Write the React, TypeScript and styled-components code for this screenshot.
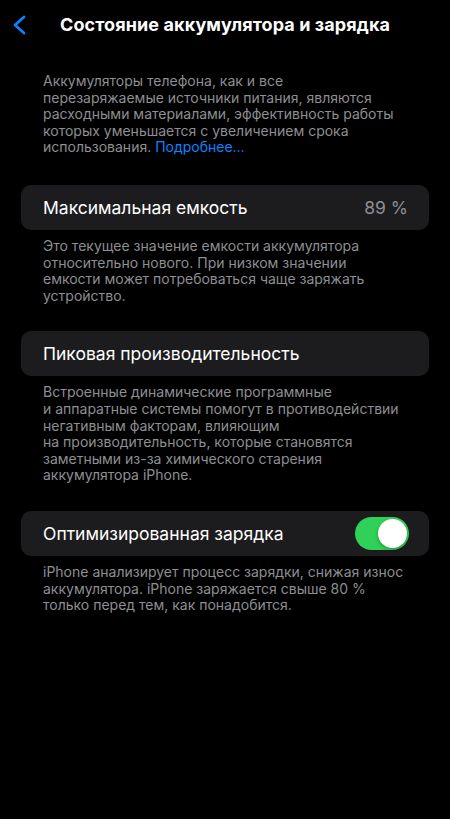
import React from 'react';
import styled, { createGlobalStyle } from 'styled-components';

const GlobalStyle = createGlobalStyle`
  html, body {
    margin: 0;
    padding: 0;
    background: #000;
  }
  body {
    font-family: Inter, "Noto Sans", sans-serif;
    -webkit-font-smoothing: antialiased;
  }
`;

const Screen = styled.div`
  width: 450px;
  min-height: 819px;
  background: #000;
  color: #fff;
  box-sizing: border-box;
`;

const NavBar = styled.header`
  height: 49px;
  display: flex;
  align-items: center;
  padding-left: 12px;

  svg {
    flex: none;
    margin-top: 1px;
  }

  h1 {
    margin: 0 0 0 34px;
    font-size: 18px;
    font-weight: 700;
    letter-spacing: 0.1px;
  }
`;

const Content = styled.main`
  padding: 24px 21px 0;
  display: flex;
  flex-direction: column;
`;

const Note = styled.p<{ $gap?: number }>`
  margin: 0 0 ${(p) => p.$gap ?? 20}px;
  padding: 0 22px;
  font-size: 14px;
  line-height: 16.6px;
  color: #8e8e93;

  a {
    color: #0a84ff;
    text-decoration: none;
  }
`;

const Cell = styled.div`
  height: 45px;
  border-radius: 10px;
  background: #1c1c1e;
  display: flex;
  align-items: center;
  justify-content: space-between;
  padding: 0 21px 0 22px;
  margin-bottom: 8px;
  font-size: 17.5px;

  span.value {
    color: #8e8e93;
  }
`;

const Toggle = styled.span<{ $on: boolean }>`
  width: 54px;
  height: 33px;
  border-radius: 17px;
  background: ${(p) => (p.$on ? '#30d158' : '#39393d')};
  display: flex;
  align-items: center;
  justify-content: ${(p) => (p.$on ? 'flex-end' : 'flex-start')};
  padding: 2px;
  box-sizing: border-box;
  margin-right: -1px;

  &::after {
    content: '';
    width: 29px;
    height: 29px;
    border-radius: 50%;
    background: #fff;
    box-shadow: 0 2px 4px rgba(0, 0, 0, 0.25);
  }
`;

export default function App() {
  return (
    <Screen>
      <GlobalStyle />
      <NavBar>
        <svg width="14" height="20" viewBox="0 0 14 20">
          <path d="M12 2 L3 10 L12 18" fill="none" stroke="#0a84ff" strokeWidth="2.7" strokeLinecap="round" strokeLinejoin="round" />
        </svg>
        <h1>Состояние аккумулятора и зарядка</h1>
      </NavBar>
      <Content>
        <Note $gap={29}>
          Аккумуляторы телефона, как и все
          <br />
          перезаряжаемые источники питания, являются
          <br />
          расходными материалами, эффективность работы
          <br />
          которых уменьшается с увеличением срока
          <br />
          использования. <a href="#">Подробнее…</a>
        </Note>
        <Cell>
          <span>Максимальная емкость</span>
          <span className="value">89 %</span>
        </Cell>
        <Note $gap={27}>
          Это текущее значение емкости аккумулятора
          <br />
          относительно нового. При низком значении
          <br />
          емкости может потребоваться чаще заряжать
          <br />
          устройство.
        </Note>
        <Cell>
          <span>Пиковая производительность</span>
        </Cell>
        <Note $gap={27}>
          Встроенные динамические программные
          <br />
          и аппаратные системы помогут в противодействии
          <br />
          негативным факторам, влияющим
          <br />
          на производительность, которые становятся
          <br />
          заметными из-за химического старения
          <br />
          аккумулятора iPhone.
        </Note>
        <Cell>
          <span>Оптимизированная зарядка</span>
          <Toggle $on />
        </Cell>
        <Note>
          iPhone анализирует процесс зарядки, снижая износ
          <br />
          аккумулятора. iPhone заряжается свыше 80 %
          <br />
          только перед тем, как понадобится.
        </Note>
      </Content>
    </Screen>
  );
}
